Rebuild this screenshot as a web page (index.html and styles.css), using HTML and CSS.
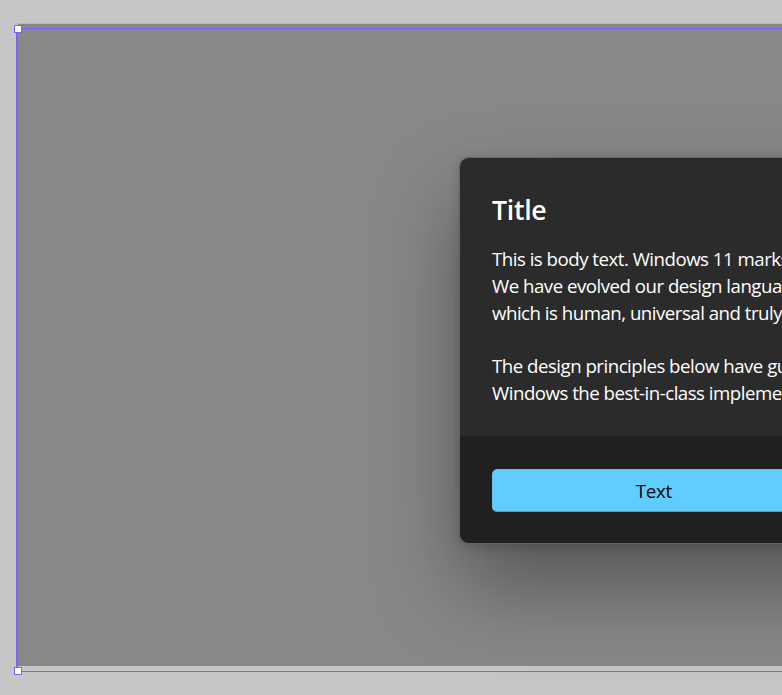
FILE: index.html
```html
<!DOCTYPE html>
<html lang="en">
<head>
<meta charset="utf-8">
<title>Content dialog</title>
<link rel="stylesheet" href="styles.css">
</head>
<body>
<div class="stage">
  <div class="canvas">
    <div class="dialog">
      <div class="dialog-content">
        <h1 class="dialog-title">Title</h1>
        <p class="dialog-body">This is body text. Windows 11 marks a visual evolution of the operating system.<br>We have evolved our design language alongside with Fluent to create a design<br>which is human, universal and truly feels like Windows.</p>
        <p class="dialog-body">The design principles below have guided us throughout the journey of making<br>Windows the best-in-class implementation of Fluent.</p>
      </div>
      <div class="dialog-footer">
        <button class="btn btn-accent">Text</button>
        <button class="btn btn-standard">Text</button>
      </div>
    </div>
  </div>
  <div class="selection">
    <span class="handle handle-tl"></span>
    <span class="handle handle-bl"></span>
  </div>
</div>
</body>
</html>
```
FILE: styles.css
```css
html, body {
  margin: 0;
  padding: 0;
  width: 782px;
  height: 695px;
  overflow: hidden;
  background: #c6c6c6;
  font-family: "Open Sans", "Noto Sans", "Liberation Sans", sans-serif;
}

.stage {
  position: relative;
  width: 782px;
  height: 695px;
  padding-top: 23px;
  box-sizing: border-box;
}

.canvas {
  margin-left: 18px;
  width: 1400px;
  height: 643px;
  box-sizing: border-box;
  background: #888888;
  border-top: 1px solid #b9b9b9;
  padding-top: 133px;
  padding-left: 441px;
}

.dialog {
  width: 722px;
  border: 1px solid #666666;
  border-radius: 10px;
  background: #2b2b2b;
  overflow: hidden;
  box-shadow: 0 43px 86px rgba(0, 0, 0, 0.37), 0 3px 11px rgba(0, 0, 0, 0.19);
}

.dialog-content {
  padding: 33px 32px 30px 32px;
}

.dialog-title {
  margin: 0 0 18px 0;
  font-size: 26.67px;
  line-height: 37.33px;
  font-weight: 600;
  color: #ffffff;
  letter-spacing: -0.3px;
}

.dialog-body {
  margin: 0 0 26.67px 0;
  font-size: 18.67px;
  line-height: 26.67px;
  color: #ffffff;
  white-space: nowrap;
  letter-spacing: -0.5px;
}

.dialog-body:last-child {
  margin-bottom: 0;
}

.dialog-footer {
  display: flex;
  gap: 10.67px;
  padding: 33px 32px 31px 32px;
  background: #202020;
}

.btn {
  flex: 1;
  height: 43px;
  border-radius: 5.33px;
  font-family: inherit;
  font-size: 18.67px;
  letter-spacing: -0.3px;
  padding: 0;
}

.btn-accent {
  background: #60cdff;
  color: #000000;
  border: 1px solid #5bc3f2;
  border-bottom-color: #4aa6d1;
}

.btn-standard {
  background: #373737;
  color: #ffffff;
  border: 1px solid #434343;
}

.selection {
  position: absolute;
  left: 16px;
  top: 28px;
  width: 900px;
  height: 644px;
  box-sizing: border-box;
  border: 1px solid #7b61ff;
  border-left-width: 2px;
  pointer-events: none;
}

.handle {
  position: absolute;
  width: 6px;
  height: 6px;
  background: #ffffff;
  border: 1px solid #7b61ff;
}

.handle-tl {
  left: -4.5px;
  top: -4px;
}

.handle-bl {
  left: -4.5px;
  bottom: -4px;
}
```
